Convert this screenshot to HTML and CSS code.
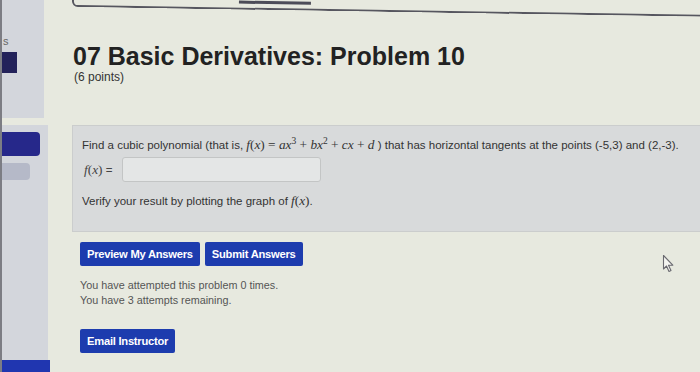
FILE: index.html
```html
<!DOCTYPE html>
<html>
<head>
<meta charset="utf-8">
<link rel="stylesheet" href="styles.css">
</head>
<body>
<aside class="sidebar">
  <div class="panel panel-top">
    <span class="side-s">s</span>
    <div class="side-block"></div>
  </div>
  <div class="panel panel-bottom">
    <div class="side-btn dark"></div>
    <div class="side-btn light"></div>
    <div class="side-foot"></div>
  </div>
</aside>
<main class="main">
  <div class="topbar"><span class="topbar-seg"></span></div>
  <h1 class="title">07 Basic Derivatives: Problem 10</h1>
  <div class="points">(6 points)</div>
  <section class="problem">
    <p class="q">Find a cubic polynomial (that is, <span class="m">f</span><span class="mr">(</span><span class="m">x</span><span class="mr">) = </span><span class="m">ax</span><sup class="ms">3</sup><span class="mr"> + </span><span class="m">bx</span><sup class="ms">2</sup><span class="mr"> + </span><span class="m">cx</span><span class="mr"> + </span><span class="m">d</span> ) that has horizontal tangents at the points (-5,3) and (2,-3).</p>
    <div class="answer-row">
      <span class="label"><span class="m">f</span><span class="mr">(</span><span class="m">x</span><span class="mr">)</span> =</span>
      <span class="input"></span>
    </div>
    <p class="verify">Verify your result by plotting the graph of <span class="m">f</span><span class="mr">(</span><span class="m">x</span><span class="mr">)</span>.</p>
  </section>
  <div class="actions">
    <span class="btn">Preview My Answers</span>
    <span class="btn">Submit Answers</span>
  </div>
  <div class="attempts">
    <div>You have attempted this problem 0 times.</div>
    <div>You have 3 attempts remaining.</div>
  </div>
  <div class="email"><span class="btn">Email Instructor</span></div>
  <svg class="cursor" width="14" height="20" viewBox="0 0 14 20"><path d="M1.5 1.5 L1.5 15 L4.5 12 L7 17.5 L9 16.5 L6.5 11.2 L10.8 11.2 Z" fill="#f4f4f0" stroke="#6a6a70" stroke-width="1.1" stroke-linejoin="round"/></svg>
</main>
</body>
</html>
```

FILE: styles.css
```css
html, body {
  margin: 0;
  padding: 0;
}
body {
  width: 700px;
  height: 372px;
  overflow: hidden;
  display: flex;
  background: #e7e9df;
  font-family: "Liberation Sans", Arial, sans-serif;
  color: #2a2a2a;
}
.sidebar {
  width: 46px;
  flex: none;
  display: flex;
  flex-direction: column;
  gap: 7px;
  border-left: 2px solid #7c7d84;
}
.panel {
  background: #d3d6dc;
}
.panel-top {
  height: 118px;
  width: 42px;
  box-sizing: border-box;
  padding-top: 35px;
}
.side-s {
  display: block;
  font-size: 11px;
  line-height: 12px;
  color: #666;
  padding-left: 1px;
  height: 17px;
}
.side-block {
  width: 15px;
  height: 21px;
  background: #23225a;
}
.panel-bottom {
  flex: 1;
  display: flex;
  flex-direction: column;
  padding-top: 7px;
  gap: 7px;
}
.side-btn {
  border-radius: 0 4px 4px 0;
}
.side-btn.dark {
  width: 38px;
  height: 24px;
  background: #26288a;
}
.side-btn.light {
  width: 28px;
  height: 17px;
  background: #b5b9c8;
}
.side-foot {
  margin-top: auto;
  height: 12px;
  width: 48px;
  background: #2036b0;
}
.main {
  flex: 1;
  position: relative;
  padding-left: 24px;
  min-width: 0;
}
.topbar {
  height: 7px;
  margin-top: -2px;
  margin-right: -20px;
  border-left: 2px solid #56565f;
  border-bottom: 2px solid #56565f;
  border-bottom-left-radius: 6px;
  transform: rotate(0.9deg);
  transform-origin: left top;
  position: relative;
}
.topbar-seg {
  position: absolute;
  left: 165px;
  top: 0;
  width: 72px;
  height: 3px;
  background: #4c4c58;
}
.title {
  margin: 35px 0 0 1px;
  font-size: 25px;
  line-height: 28px;
  font-weight: bold;
  color: #222;
}
.points {
  margin: 0 0 0 2px;
  font-size: 12px;
  line-height: 14px;
  color: #333;
}
.problem {
  margin-top: 41px;
  margin-right: -30px;
  height: 107px;
  box-sizing: border-box;
  background: #d8dadb;
  border: 1px solid #cbcdcd;
  padding: 11px 9px 0 9px;
  font-size: 11.5px;
  color: #333;
}
.q {
  margin: 0;
  line-height: 16px;
  white-space: nowrap;
}
.m {
  font-family: "Liberation Serif", "Times New Roman", serif;
  font-style: italic;
  font-size: 13.3px;
}
.mr {
  font-family: "Liberation Serif", "Times New Roman", serif;
  font-size: 13.3px;
}
.ms {
  font-family: "Liberation Serif", "Times New Roman", serif;
  font-size: 9.5px;
  line-height: 0;
}
.answer-row {
  display: flex;
  align-items: center;
  gap: 4px;
  margin-top: 4px;
}
.label {
  width: 34px;
  padding-left: 2px;
  color: #444;
}
.input {
  width: 197px;
  height: 23px;
  background: #e4e6e6;
  border: 1px solid #c3c5c5;
  border-radius: 3px;
}
.verify {
  margin: 11px 0 0 0;
  line-height: 16px;
}
.actions {
  display: flex;
  gap: 5px;
  margin-top: 10px;
  margin-left: 8px;
}
.btn {
  display: inline-block;
  background: #1d3cae;
  color: #fff;
  font-weight: bold;
  font-size: 11.2px;
  line-height: 24px;
  padding: 0 7px;
  border-radius: 2px;
  letter-spacing: -0.25px;
}
.attempts {
  margin: 12px 0 0 8px;
  font-size: 10.8px;
  line-height: 15px;
  color: #555;
}
.email {
  margin: 21px 0 0 8px;
}
.cursor {
  position: absolute;
  left: 660px;
  top: 254px;
  margin-left: -46px;
}
```
